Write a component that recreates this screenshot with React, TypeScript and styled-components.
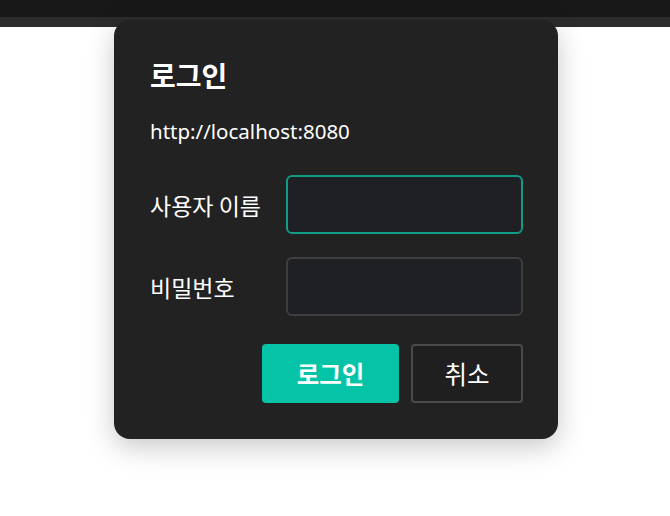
import React from 'react';
import styled, { createGlobalStyle } from 'styled-components';

const GlobalStyle = createGlobalStyle`
  html, body {
    margin: 0;
    padding: 0;
    background: #ffffff;
  }
  body {
    font-family: "Noto Sans", "Noto Sans CJK KR", sans-serif;
  }
`;

const Page = styled.div`
  position: relative;
  width: 100%;
  height: 516px;
  background: #ffffff;
`;

const TopBar = styled.div`
  height: 17px;
  background: #181818;
`;

const SubBar = styled.div`
  height: 10px;
  background: #2c2c2c;
`;

const Dialog = styled.div`
  position: absolute;
  top: 20px;
  left: 114px;
  width: 444px;
  box-sizing: border-box;
  padding: 36px 35px 36px 36px;
  background: #222222;
  border-radius: 16px;
  box-shadow: 0 8px 28px rgba(0, 0, 0, 0.22);
  color: #ffffff;
`;

const Title = styled.h2`
  margin: 0;
  font-family: "Noto Sans CJK KR", sans-serif;
  font-size: 28px;
  font-weight: 700;
  line-height: 38px;
`;

const Url = styled.p`
  margin: 23px 0 0;
  font-family: "Noto Sans", "Noto Sans CJK KR", sans-serif;
  font-size: 20.5px;
  line-height: 28px;
`;

const Form = styled.div`
  margin-top: 30px;
  display: grid;
  grid-template-columns: 136px 1fr;
  row-gap: 23px;
  align-items: center;
`;

const Label = styled.label`
  font-family: "Noto Sans CJK KR", sans-serif;
  font-size: 23px;
  line-height: 30px;
`;

const Input = styled.input<{ $focused?: boolean }>`
  box-sizing: border-box;
  height: 59px;
  width: 100%;
  background: #1f2023;
  border: 2px solid ${(p) => (p.$focused ? '#0f9d86' : '#3e3e40')};
  border-radius: 6px;
  outline: none;
  color: #ffffff;
  font-size: 18px;
  padding: 0 12px;
`;

const Actions = styled.div`
  margin-top: 28px;
  display: flex;
  justify-content: flex-end;
  gap: 12px;
`;

const Button = styled.button<{ $primary?: boolean }>`
  box-sizing: border-box;
  height: 59px;
  width: ${(p) => (p.$primary ? '137px' : '112px')};
  border-radius: 4px;
  border: ${(p) => (p.$primary ? 'none' : '2px solid #4a4a4a')};
  background: ${(p) => (p.$primary ? '#05c3a6' : '#1f1f1f')};
  color: #ffffff;
  font-family: "Noto Sans CJK KR", sans-serif;
  font-size: 24.5px;
  font-weight: ${(p) => (p.$primary ? 700 : 400)};
  cursor: pointer;
`;

export default function App() {
  return (
    <>
      <GlobalStyle />
      <Page>
        <TopBar />
        <SubBar />
        <Dialog>
          <Title>로그인</Title>
          <Url>http://localhost:8080</Url>
          <Form>
            <Label>사용자 이름</Label>
            <Input $focused />
            <Label>비밀번호</Label>
            <Input type="password" />
          </Form>
          <Actions>
            <Button $primary>로그인</Button>
            <Button>취소</Button>
          </Actions>
        </Dialog>
      </Page>
    </>
  );
}
